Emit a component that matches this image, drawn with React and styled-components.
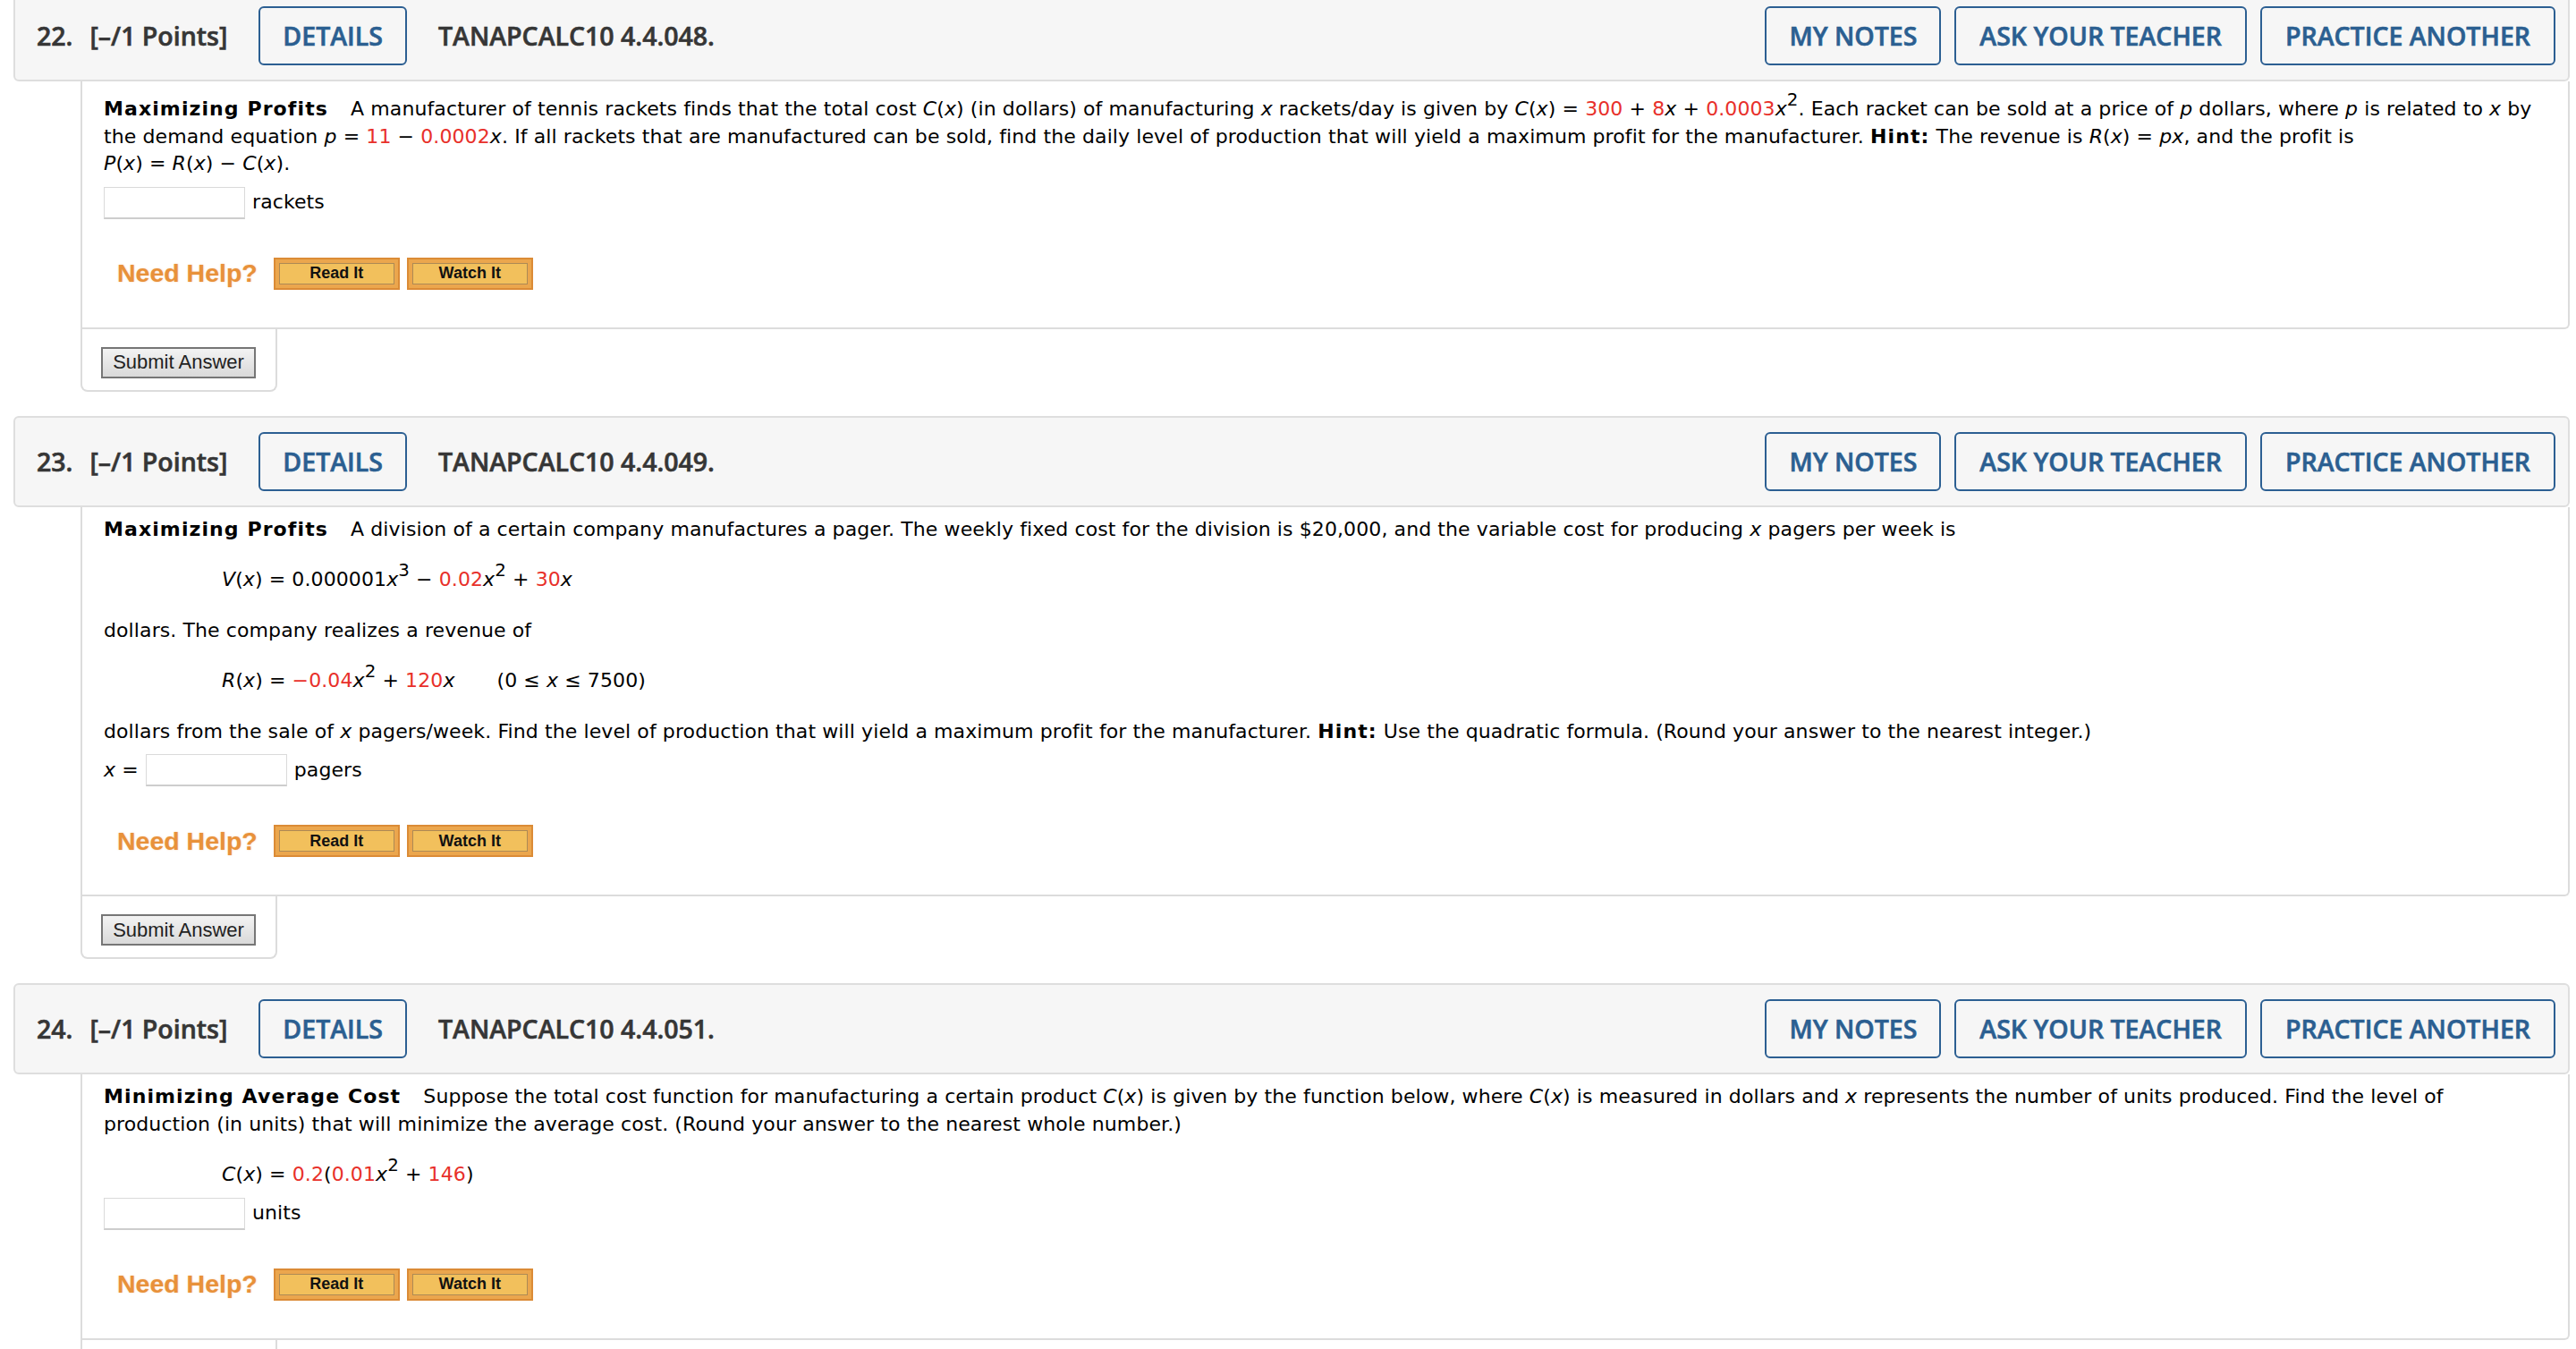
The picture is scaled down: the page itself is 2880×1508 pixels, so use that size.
import styled, { createGlobalStyle } from 'styled-components'

const GlobalStyle = createGlobalStyle`
  html, body {
    margin: 0;
    padding: 0;
    background: #ffffff;
  }
  body {
    font-family: "DejaVu Sans", Verdana, sans-serif;
    color: #000000;
  }
`

const Page = styled.div`
  padding: 0 7px 0 15px;
  margin-top: -11px;
`

const Question = styled.section`
  margin-bottom: 27px;
`

const Header = styled.div`
  display: flex;
  align-items: center;
  box-sizing: border-box;
  background: #f6f6f6;
  border: 2px solid #dedede;
  border-radius: 6px;
  padding: 16px 14px 16px 24px;
  font-family: "Open Sans", sans-serif;
  font-weight: 600;
  font-size: 28.5px;
  color: #363636;
  -webkit-text-stroke: 0.6px currentColor;
`

const QNumber = styled.span`
  margin-right: 19px;
`

const Points = styled.span`
  margin-right: 35px;
`

const Code = styled.span`
  margin-left: 35px;
  flex: 1;
`

const Actions = styled.div`
  display: flex;
  gap: 15px;
`

const OutlineButton = styled.button`
  box-sizing: border-box;
  height: 66px;
  padding: 0 ${({ narrow }) => (narrow ? 25 : 26)}px;
  border: 2px solid #2c5f92;
  border-radius: 6px;
  background: transparent;
  color: #2b5f91;
  font-family: "Open Sans", sans-serif;
  font-weight: 600;
  font-size: 28.5px;
  -webkit-text-stroke: 0.6px currentColor;
  cursor: pointer;
`

const Body = styled.div`
  margin-left: 75px;
  border: 2px solid #dcdcdc;
  border-top: none;
  border-radius: 0 0 6px 0;
  padding: ${({ top }) => top}px 22px 42px 24px;
  font-size: 22px;
  line-height: 30.5px;
  letter-spacing: 0.1px;
`

const Text = styled.p`
  margin: 0;
`

const Strong = styled.b`
  letter-spacing: 1.1px;
`

const Lead = styled(Strong)`
  margin-right: 18px;
`

const Red = styled.span`
  color: #e8302a;
`

const Sup = styled.sup`
  font-size: 0.9em;
  line-height: 0;
  vertical-align: 0.55em;
`

const NoWrap = styled.span`
  white-space: nowrap;
`

const Formula = styled.div`
  padding-left: 132px;
  margin: 26px 0 ${({ tight }) => (tight ? '10px' : '26px')};
`

const Range = styled.span`
  margin-left: 47px;
`

const AnswerRow = styled.div`
  display: flex;
  align-items: center;
  gap: 8px;
  margin-top: 10px;
`

const AnswerInput = styled.input`
  box-sizing: border-box;
  width: 158px;
  height: 36px;
  border: 1px solid #dadada;
  border-bottom: 2px solid #cdcdcd;
  background: #ffffff;
`

const HelpRow = styled.div`
  display: flex;
  align-items: center;
  margin-top: 43px;
  padding-left: 15px;
`

const HelpLabel = styled.span`
  font-family: "Liberation Sans", Arial, sans-serif;
  font-weight: 700;
  font-size: 28.5px;
  letter-spacing: 0;
  color: #e8913a;
  text-shadow: 0 0 2px rgba(232, 145, 58, 0.45);
  margin-right: 18px;
`

const HelpButton = styled.button`
  box-sizing: border-box;
  width: 141px;
  height: 36px;
  margin-right: 8px;
  padding: 0;
  border: 2px solid #db8b36;
  background: #f2c05c;
  box-shadow: inset 0 0 0 4px #eba64d, inset 0 0 0 5px #ad8a55;
  font-family: "Liberation Sans", Arial, sans-serif;
  font-weight: 700;
  font-size: 18px;
  color: #111111;
  cursor: pointer;
`

const SubmitTab = styled.div`
  box-sizing: border-box;
  width: 220px;
  margin-left: 75px;
  border: 2px solid #dcdcdc;
  border-top: none;
  border-radius: 0 0 8px 8px;
  padding: 20px 0 13px 21px;
`

const SubmitButton = styled.button`
  box-sizing: border-box;
  width: 173px;
  height: 35px;
  padding: 0;
  border: 2px solid #767676;
  background: linear-gradient(#f3f3f3, #d9d9d9);
  font-family: "Liberation Sans", Arial, sans-serif;
  font-size: 22px;
  color: #222222;
  cursor: pointer;
`

const QuestionHeader = ({ num, code }) => (
  <Header>
    <QNumber>{num}.</QNumber>
    <Points>[–/1 Points]</Points>
    <OutlineButton narrow>DETAILS</OutlineButton>
    <Code>{code}</Code>
    <Actions>
      <OutlineButton narrow>MY NOTES</OutlineButton>
      <OutlineButton>ASK YOUR TEACHER</OutlineButton>
      <OutlineButton>PRACTICE ANOTHER</OutlineButton>
    </Actions>
  </Header>
)

const NeedHelp = () => (
  <HelpRow>
    <HelpLabel>Need Help?</HelpLabel>
    <HelpButton>Read It</HelpButton>
    <HelpButton>Watch It</HelpButton>
  </HelpRow>
)

const Submit = () => (
  <SubmitTab>
    <SubmitButton>Submit Answer</SubmitButton>
  </SubmitTab>
)

const X = () => <i>x</i>

export default function App() {
  return (
    <Page>
      <GlobalStyle />

      <Question>
        <QuestionHeader num={22} code="TANAPCALC10 4.4.048." />
        <Body top={16}>
          <Text>
            <Lead>Maximizing Profits</Lead> A manufacturer of tennis rackets finds that the total cost <i>C</i>(<X />) (in dollars) of
            manufacturing <X /> rackets/day is given by <i>C</i>(<X />) = <Red>300</Red> + <Red>8</Red><X /> + <Red>0.0003</Red><X /><Sup>2</Sup>.
            Each racket can be sold at a price of <i>p</i> dollars, where <i>p</i> is related to <X /> by the demand
            equation <i>p</i> = <Red>11</Red> − <Red>0.0002</Red><X />. If all rackets that are manufactured can be sold, find the daily
            level of production that will yield a maximum profit for the manufacturer. <Strong>Hint:</Strong> The revenue
            is <i>R</i>(<X />) = <i>px</i>, and the profit is
            <br />
            <NoWrap><i>P</i>(<X />) = <i>R</i>(<X />) − <i>C</i>(<X />).</NoWrap>
          </Text>
          <AnswerRow>
            <AnswerInput type="text" />
            <span>rackets</span>
          </AnswerRow>
          <NeedHelp />
        </Body>
        <Submit />
      </Question>

      <Question>
        <QuestionHeader num={23} code="TANAPCALC10 4.4.049." />
        <Body top={10}>
          <Text>
            <Lead>Maximizing Profits</Lead> A division of a certain company manufactures a pager. The weekly fixed cost for
            the division is $20,000, and the variable cost for producing <X /> pagers per week is
          </Text>
          <Formula>
            <i>V</i>(<X />) = 0.000001<X /><Sup>3</Sup> − <Red>0.02</Red><X /><Sup>2</Sup> + <Red>30</Red><X />
          </Formula>
          <Text>dollars. The company realizes a revenue of</Text>
          <Formula>
            <i>R</i>(<X />) = <Red>−0.04</Red><X /><Sup>2</Sup> + <Red>120</Red><X />
            <Range>(0 ≤ <X /> ≤ 7500)</Range>
          </Formula>
          <Text>
            dollars from the sale of <X /> pagers/week. Find the level of production that will yield a maximum profit for the
            manufacturer. <Strong>Hint:</Strong> Use the quadratic formula. (Round your answer to the nearest integer.)
          </Text>
          <AnswerRow>
            <span><X /> =</span>
            <AnswerInput type="text" />
            <span>pagers</span>
          </AnswerRow>
          <NeedHelp />
        </Body>
        <Submit />
      </Question>

      <Question>
        <QuestionHeader num={24} code="TANAPCALC10 4.4.051." />
        <Body top={10}>
          <Text>
            <Lead>Minimizing Average Cost</Lead> Suppose the total cost function for manufacturing a certain
            product <i>C</i>(<X />) is given by the function below, where <i>C</i>(<X />) is measured in dollars and <X /> represents
            the number of units produced. Find the level of production (in units) that will minimize the average cost.
            (Round your answer to the nearest whole number.)
          </Text>
          <Formula tight>
            <i>C</i>(<X />) = <Red>0.2</Red>(<Red>0.01</Red><X /><Sup>2</Sup> + <Red>146</Red>)
          </Formula>
          <AnswerRow>
            <AnswerInput type="text" />
            <span>units</span>
          </AnswerRow>
          <NeedHelp />
        </Body>
        <Submit />
      </Question>
    </Page>
  )
}
